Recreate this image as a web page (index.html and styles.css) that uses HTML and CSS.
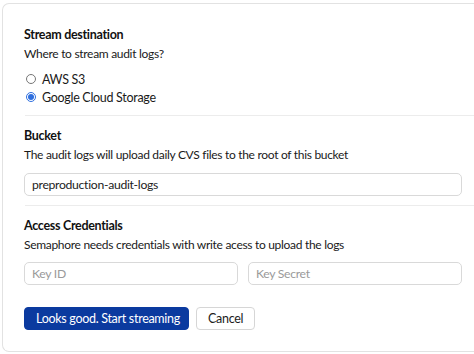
FILE: index.html
```html
<!DOCTYPE html>
<html lang="en">
<head>
  <meta charset="UTF-8">
  <title>Audit log streaming</title>
  <link rel="stylesheet" href="styles.css">
</head>
<body>
  <form class="card">
    <div class="section">
      <h3>Stream destination</h3>
      <p>Where to stream audit logs?</p>
      <div class="options">
        <label class="option"><input type="radio" name="dest"> AWS S3</label>
        <label class="option"><input type="radio" name="dest" checked> Google Cloud Storage</label>
      </div>
    </div>

    <hr class="divider">

    <div class="section">
      <h3>Bucket</h3>
      <p>The audit logs will upload daily CVS files to the root of this bucket</p>
      <input class="field" type="text" value="preproduction-audit-logs">
    </div>

    <hr class="divider">

    <div class="section">
      <h3>Access Credentials</h3>
      <p>Semaphore needs credentials with write acess to upload the logs</p>
      <div class="row">
        <input class="field" type="text" placeholder="Key ID">
        <input class="field" type="text" placeholder="Key Secret">
      </div>
    </div>

    <div class="actions">
      <button type="button" class="button primary">Looks good. Start streaming</button>
      <button type="button" class="button">Cancel</button>
    </div>
  </form>
</body>
</html>
```

FILE: styles.css
```css
body {
  margin: 0;
  background: #fff;
  font-family: Lato, 'Noto Sans', sans-serif;
  font-size: 12px;
  letter-spacing: -0.3px;
  line-height: 19px;
  color: #1a1a1a;
}
.card {
  width: 472px;
  margin: 3px 0 0 2px;
  padding: 21px 0 21px 21px;
  border: 1px solid #e2e2e2;
  border-right: none;
  border-radius: 7px 0 0 7px;
  box-sizing: border-box;
}
.section {
  width: 438px;
}
h3 {
  margin: 0;
  font-size: 12.5px;
  font-weight: 700;
  color: #111;
}
p {
  margin: 0;
}
.options {
  margin-top: 7px;
}
.option {
  display: flex;
  align-items: center;
  gap: 6px;
  height: 18px;
  font-size: 12.5px;
}
.option input {
  margin: 0 0 0 2px;
  width: 10px;
  height: 10px;
  accent-color: #2f6fde;
}
.divider {
  border: none;
  border-top: 1px solid #ececec;
  margin: 9px 0 10px 1px;
}
.field {
  display: block;
  box-sizing: border-box;
  width: 100%;
  height: 23px;
  margin-top: 9px;
  padding: 0 7px;
  border: 1px solid #d9d9d9;
  border-radius: 5px;
  font: inherit;
  font-size: 12.2px;
  letter-spacing: -0.3px;
  color: #222;
}
.field + .divider {
  margin-top: 11px;
}
.field::placeholder {
  color: #9a9a9a;
}
.row {
  display: flex;
  gap: 10px;
  margin-top: 8px;
}
.row .field {
  margin: 0;
}
.actions {
  display: flex;
  gap: 7px;
  margin-top: 22px;
}
.button {
  height: 23px;
  padding: 0 11px;
  border: 1px solid #d6d6d6;
  border-radius: 4px;
  background: #fff;
  font: inherit;
  font-size: 12.5px;
  letter-spacing: -0.3px;
  color: #1c1c1c;
  white-space: nowrap;
}
.primary {
  width: 165px;
  border-color: #0b3a9f;
  background: #0b3a9f;
  color: #fff;
}
```
